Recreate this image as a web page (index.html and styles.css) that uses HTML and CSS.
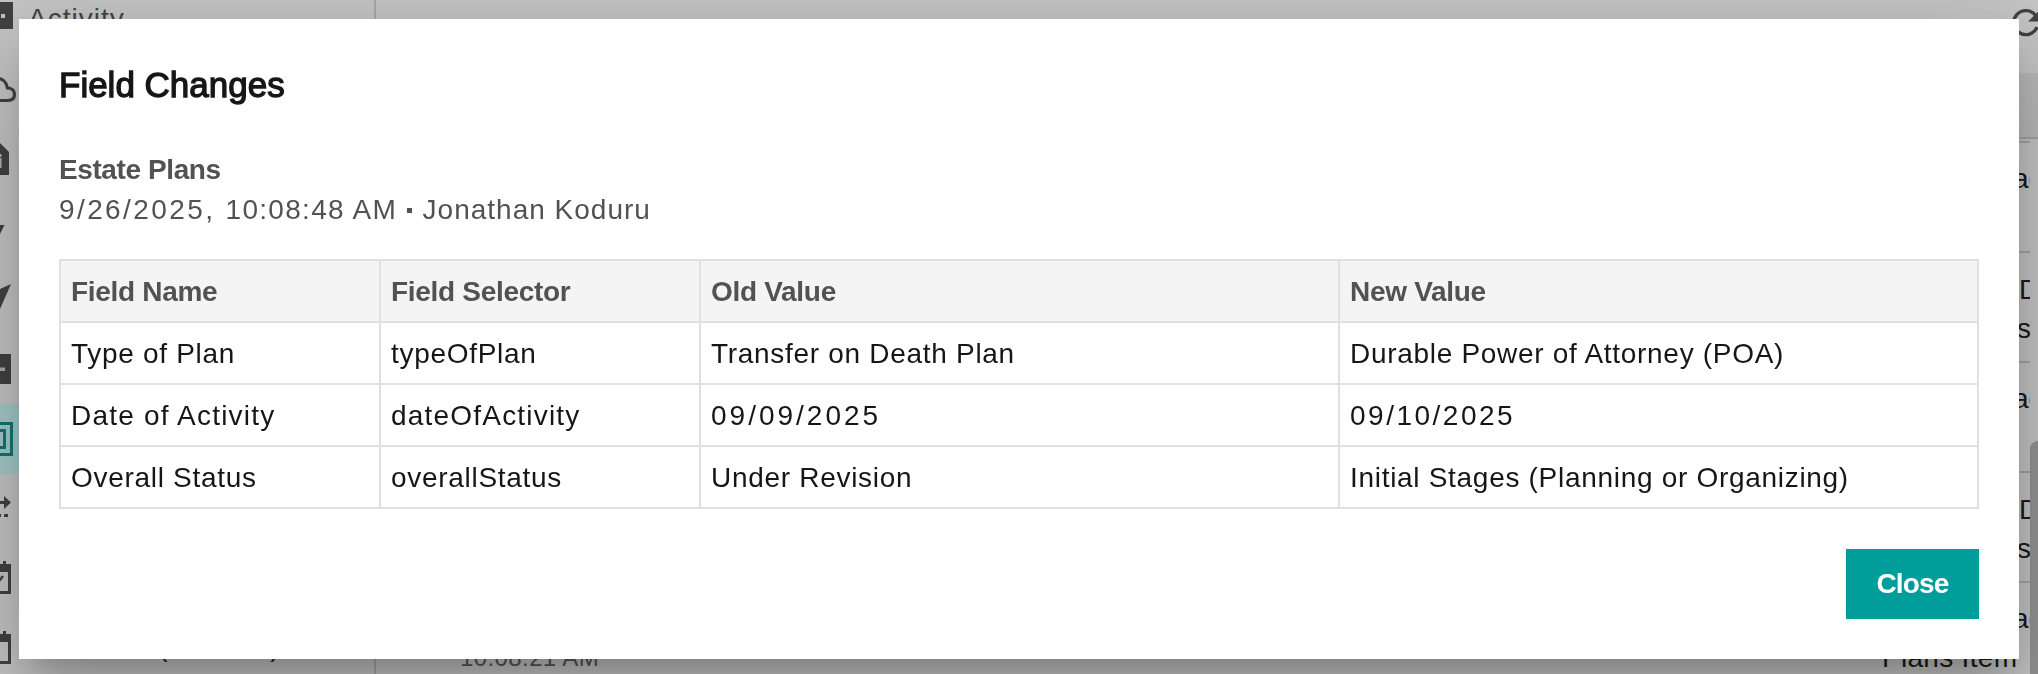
FILE: index.html
```html
<!DOCTYPE html>
<html lang="en">
<head>
  <meta charset="UTF-8">
  <meta name="viewport" content="width=device-width, initial-scale=1.0">
  <title>Field Changes</title>
  <link rel="stylesheet" href="styles.css">
</head>
<body>
  <div class="page">
    <nav class="sidebar">
      <div class="nav-item">
        <svg class="icon" viewBox="0 4 40 70"><path fill="#424242" fill-rule="evenodd" d="M0 22h13v27H0zM1 34h4v4H1z"/></svg>
        <span class="nav-label">Activity</span>
      </div>
      <div class="nav-item">
        <svg class="icon" viewBox="0 4 40 70"><path fill="none" stroke="#424242" stroke-width="3.2" d="M-4 28C2 28 6.500 32 7.500 38C12 38 14.500 41 14.500 44.500C14.500 48.500 12 50.500 8 50.500H-4"/></svg>
      </div>
      <div class="nav-item">
        <svg class="icon" viewBox="0 4 40 70"><path fill="#424242" d="M0 23l9 9v23H0z"/><path fill="#b5b5b5" d="M0 34h1.500v3H0zM0 38h1.500v10H0z"/></svg>
      </div>
      <div class="nav-item">
        <svg class="icon" viewBox="0 4 40 70"><path fill="#424242" d="M0 35h4.500L0 44z"/></svg>
      </div>
      <div class="nav-item">
        <svg class="icon" viewBox="0 4 40 70"><path fill="#424242" d="M11 24L0 49V29z"/></svg>
      </div>
      <div class="nav-item">
        <svg class="icon" viewBox="0 4 40 70"><path fill="#424242" d="M0 24h11v30H0z"/><path fill="#aaa" d="M0 37.500h5v3.500H0z"/></svg>
      </div>
      <div class="nav-item active">
        <svg class="icon" viewBox="0 0 40 70"><g fill="none" stroke="#137774"><path stroke-width="3" d="M0 19.500h11.500v31H0"/><path stroke-width="3" d="M0 26.500h4.500v17H0"/></g></svg>
      </div>
      <div class="nav-item">
        <svg class="icon" viewBox="0 0 40 70"><path fill="#424242" d="M0 27h4v-5l7 6.500-7 6.500v-5H0zM0 40h1v3H0zM4 40h4v3H4z"/></svg>
      </div>
      <div class="nav-item">
        <svg class="icon" viewBox="0 0 40 70"><path fill="#424242" fill-rule="evenodd" d="M0 20h3v-3h3v3h5v30H0zM0 28v19h8V28z"/><path fill="none" stroke="#424242" stroke-width="2.500" d="M-1 37l4-5"/></svg>
      </div>
      <div class="nav-item">
        <svg class="icon" viewBox="0 0 40 70"><path fill="#424242" fill-rule="evenodd" d="M0 20h3v-3h3v3h5v30H0zM0 28v19h8V28z"/></svg>
        <span class="nav-label dark">Activities (Planned)</span>
      </div>
    </nav>
    <main class="content">
      <div class="toolbar">
        <svg class="refresh" viewBox="0 0 40 40"><path fill="none" stroke="#424242" stroke-width="3.400" d="M29.500 15.500A12 12 0 1 0 31 27"/><path fill="#424242" d="M36 8v13.500H22z"/></svg>
      </div>
      <div class="list-head"></div>
      <div class="list">
        <div class="list-row single">activity</div>
        <div class="list-row">Data<br><span class="saved">saved</span></div>
        <div class="list-row single">activity</div>
        <div class="list-row">Data<br><span class="saved">saved</span></div>
        <div class="list-row last">
          <span class="time">10:08:21 AM</span>
          <span class="item">Plans Item</span>
          <span class="action">activity</span>
        </div>
      </div>
      <div class="scrollbar"></div>
    </main>
  </div>

  <div class="overlay">
    <div class="modal">
      <h2 class="title">Field Changes</h2>
      <div class="subtitle">Estate Plans</div>
      <div class="meta"><span class="meta-date">9/26/2025, </span><span class="meta-time">10:08:48 AM</span> <span class="dot"></span> Jonathan Koduru</div>
      <table class="changes">
        <thead>
          <tr>
            <th class="narrow">Field Name</th>
            <th class="narrow">Field Selector</th>
            <th>Old Value</th>
            <th>New Value</th>
          </tr>
        </thead>
        <tbody>
          <tr>
            <td>Type of Plan</td>
            <td>typeOfPlan</td>
            <td>Transfer on Death Plan</td>
            <td>Durable Power of Attorney (POA)</td>
          </tr>
          <tr>
            <td class="wide">Date of Activity</td>
            <td class="wide">dateOfActivity</td>
            <td class="date">09/09/2025</td>
            <td class="date new">09/10/2025</td>
          </tr>
          <tr>
            <td>Overall Status</td>
            <td>overallStatus</td>
            <td>Under Revision</td>
            <td>Initial Stages (Planning or Organizing)</td>
          </tr>
        </tbody>
      </table>
      <div class="actions">
        <button class="close">Close</button>
      </div>
    </div>
  </div>
</body>
</html>
```
FILE: styles.css
```css
* {
  box-sizing: border-box;
}
body {
  margin: 0;
  height: 674px;
  overflow: hidden;
  font-family: "Liberation Sans", Arial, sans-serif;
  font-size: 28px;
  background-color: #c6c6c6;
}
.page {
  display: flex;
  height: 674px;
  overflow: hidden;
}
/* Sidebar */
.sidebar {
  width: 376px;
  margin-top: -16px;
  border-right: 2px solid #a9a9a9;
  flex-shrink: 0;
}
.nav-item {
  display: flex;
  align-items: center;
  height: 70px;
}
.nav-item.active {
  background-color: #a5cccb;
}
.icon {
  display: block;
  width: 40px;
  height: 70px;
  flex-shrink: 0;
}
.nav-label {
  margin-left: -12px;
  color: #444;
  letter-spacing: 1px;
}
.nav-label.dark {
  margin-left: -4px;
  padding-bottom: 4px;
  color: #222;
  letter-spacing: 0;
  word-spacing: 4px;
}
/* Page content */
.content {
  position: relative;
  flex: 1;
}
.toolbar {
  display: flex;
  justify-content: flex-end;
  height: 73px;
}
.refresh {
  width: 40px;
  height: 40px;
  margin-right: -8px;
}
.list-head {
  height: 66px;
  background-color: #bbb;
  border-bottom: 2px solid #a5a5a5;
}
.list {
  width: 1654px;
  margin-top: 2px;
  border-top: 2px solid #a5a5a5;
  overflow: hidden;
}
.list-row {
  height: 110px;
  padding: 17px 0 0 1643px;
  border-bottom: 2px solid #a5a5a5;
  line-height: 39px;
  color: #1a1a1a;
  white-space: nowrap;
}
.list-row.single {
  padding: 16px 0 0 1637px;
}
.saved {
  margin-left: -2px;
}
.list-row.last {
  display: grid;
  grid-template-columns: 1420px 217px 1fr;
  grid-template-rows: 39px 39px;
  padding: 16px 0 0;
}
.last .time {
  grid-row: 2;
  padding-left: 84px;
  font-size: 24px;
  letter-spacing: 0.4px;
  color: #555;
}
.last .item {
  grid-row: 2;
  padding-left: 86px;
  letter-spacing: 0.3px;
}
.last .action {
  grid-row: 1;
  grid-column: 3;
}
.scrollbar {
  position: absolute;
  top: 441px;
  right: -8px;
  width: 16px;
  height: 400px;
  border-radius: 8px;
  background-color: #959595;
}
/* Modal */
.overlay {
  position: fixed;
  inset: 0;
  padding: 19px;
}
.modal {
  height: 640px;
  padding: 40px;
  background-color: #fff;
  box-shadow: 0 22px 30px -14px rgba(0,0,0,0.2), 0 48px 76px 6px rgba(0,0,0,0.14), 0 18px 92px 16px rgba(0,0,0,0.12);
}
.title {
  margin: 0;
  height: 88px;
  line-height: 52px;
  font-size: 35px;
  font-weight: normal;
  -webkit-text-stroke: 1.3px #161616;
  color: #161616;
}
.subtitle {
  height: 40px;
  line-height: 46px;
  font-weight: bold;
  letter-spacing: -0.4px;
  color: #525252;
}
.meta {
  height: 72px;
  line-height: 46px;
  color: #525252;
  letter-spacing: 1px;
}
.meta-date {
  letter-spacing: 2.4px;
}
.meta-time {
  letter-spacing: 1.3px;
}
.dot {
  display: inline-block;
  width: 5px;
  height: 5px;
  margin: 0 2px 6px 1px;
  background-color: #525252;
}
.changes {
  width: 1920px;
  table-layout: fixed;
  border-collapse: collapse;
}
.changes th,
.changes td {
  height: 62px;
  padding: 2px 10px 0;
  border: 2px solid #e0e0e0;
  text-align: left;
  line-height: 40px;
  color: #161616;
  letter-spacing: 0.7px;
  white-space: nowrap;
}
.changes th {
  background-color: #f4f4f4;
  color: #525252;
  letter-spacing: -0.3px;
}
.changes .wide {
  letter-spacing: 1.2px;
}
.changes .date {
  letter-spacing: 3px;
}
.changes .date.new {
  letter-spacing: 2.5px;
}
.narrow {
  width: 320px;
}
.actions {
  display: flex;
  justify-content: flex-end;
  margin-top: 40px;
}
.close {
  width: 133px;
  height: 70px;
  padding: 0;
  border: none;
  background-color: #009d9a;
  color: #fff;
  font-family: inherit;
  font-size: 28px;
  font-weight: bold;
  letter-spacing: -0.8px;
  cursor: pointer;
}
```
